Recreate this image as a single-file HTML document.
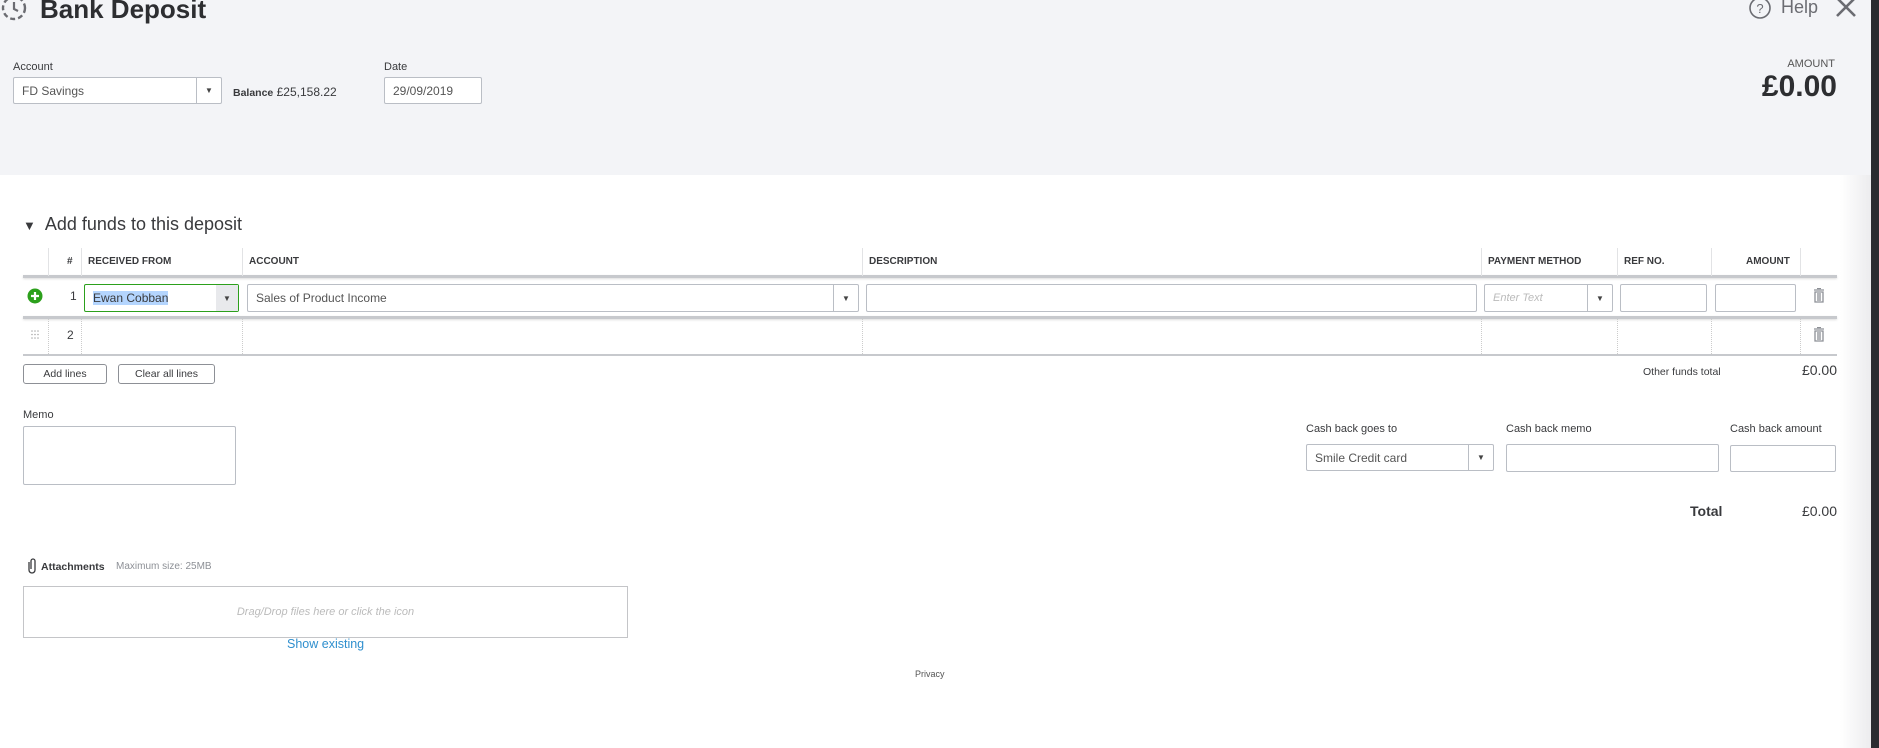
<!DOCTYPE html>
<html><head><meta charset="utf-8"><style>
*{box-sizing:border-box;margin:0;padding:0}
body{width:1879px;height:748px;overflow:hidden;background:#fff;font-family:"Liberation Sans",sans-serif;color:#393a3d;position:relative}
.a{position:absolute}
.hdr{left:0;top:0;width:1871px;height:175px;background:#f3f4f7}
.lbl{font-size:11px;color:#393a3d}
.inp{position:absolute;border:1px solid #babec5;background:#fff;border-radius:2px;font-size:12px;color:#555;padding-left:8px;display:flex;align-items:center}
.dd{position:absolute;right:0;top:0;bottom:0;width:25px;border-left:1px solid #babec5;display:flex;align-items:center;justify-content:center;font-size:8px;color:#444}
.th{font-size:10px;font-weight:bold;top:256px}
.vl{position:absolute;width:0;border-left:1px dotted #ccc}
.btn{position:absolute;border:1px solid #8d9096;border-radius:3px;font-size:10.5px;display:flex;align-items:center;justify-content:center;background:#fff}
</style></head><body>
<div class="a hdr"></div>
<div class="a" style="right:0;top:0;width:8px;height:748px;background:#2a2c30"></div>
<div class="a" style="left:1840px;top:175px;width:31px;height:573px;background:linear-gradient(90deg,#fff,#ececee)"></div>
<svg class="a" style="left:0;top:-6px" width="28" height="28" viewBox="0 0 28 28"><circle cx="14" cy="14" r="11" fill="none" stroke="#6b6c72" stroke-width="2.4" stroke-dasharray="5 3"/><path d="M14 8v7l4 2" stroke="#6b6c72" stroke-width="2.2" fill="none"/></svg>
<div class="a" style="left:40px;top:-6px;font-size:26px;font-weight:bold;color:#2d2e31">Bank Deposit</div>
<svg class="a" style="left:1748px;top:-3px" width="24" height="24"><circle cx="12" cy="11" r="10" fill="none" stroke="#6b6c72" stroke-width="1.6"/><text x="12" y="16" font-size="13" text-anchor="middle" fill="#6b6c72" font-family="Liberation Sans">?</text></svg>
<div class="a" style="left:1781px;top:-3px;font-size:18px;color:#6b6c72">Help</div>
<svg class="a" style="left:1834px;top:-4px" width="24" height="24"><path d="M3 2L21 20M21 2L3 20" stroke="#6b6c72" stroke-width="2.6"/></svg>
<div class="a lbl" style="left:13px;top:61px">Account</div>
<div class="inp" style="left:13px;top:77px;width:209px;height:27px">FD Savings<div class="dd">▼</div></div>
<div class="a" style="left:233px;top:85px;font-size:12px"><span style="font-size:10.5px;font-weight:bold">Balance</span> £25,158.22</div>
<div class="a lbl" style="left:384px;top:61px">Date</div>
<div class="inp" style="left:384px;top:77px;width:98px;height:27px">29/09/2019</div>
<div class="a" style="right:44px;top:58px;font-size:11px;color:#555">AMOUNT</div>
<div class="a" style="right:42px;top:70px;font-size:30px;font-weight:bold;color:#2d2e31">£0.00</div>
<div class="a" style="left:23px;top:214px;font-size:18px"><span style="font-size:13px">▼</span>&nbsp; Add funds to this deposit</div>
<!-- table -->
<div class="a th" style="left:67px">#</div>
<div class="a th" style="left:88px">RECEIVED FROM</div>
<div class="a th" style="left:249px">ACCOUNT</div>
<div class="a th" style="left:869px">DESCRIPTION</div>
<div class="a th" style="left:1488px">PAYMENT METHOD</div>
<div class="a th" style="left:1624px">REF NO.</div>
<div class="a th" style="left:1746px">AMOUNT</div>
<div class="a" style="left:23px;top:275px;width:1814px;height:3px;background:#c7c9cd;box-shadow:0 1px 2px #ddd"></div>
<div class="a" style="left:23px;top:316px;width:1814px;height:3px;background:#c7c9cd;box-shadow:0 1px 2px #ddd"></div>
<div class="a" style="left:23px;top:354px;width:1814px;height:2px;background:#c7c9cd"></div>
<div class="vl" style="left:48px;top:248px;height:28px;border-left-style:solid;border-color:#e2e3e5"></div>
<div class="vl" style="left:81px;top:248px;height:28px;border-left-style:solid;border-color:#e2e3e5"></div>
<div class="vl" style="left:242px;top:248px;height:28px;border-left-style:solid;border-color:#e2e3e5"></div>
<div class="vl" style="left:862px;top:248px;height:28px;border-left-style:solid;border-color:#e2e3e5"></div>
<div class="vl" style="left:1481px;top:248px;height:28px;border-left-style:solid;border-color:#e2e3e5"></div>
<div class="vl" style="left:1617px;top:248px;height:28px;border-left-style:solid;border-color:#e2e3e5"></div>
<div class="vl" style="left:1711px;top:248px;height:28px;border-left-style:solid;border-color:#e2e3e5"></div>
<div class="vl" style="left:1800px;top:248px;height:28px;border-left-style:solid;border-color:#e2e3e5"></div>
<div class="vl" style="left:48px;top:319px;height:35px"></div>
<div class="vl" style="left:81px;top:319px;height:35px"></div>
<div class="vl" style="left:242px;top:319px;height:35px"></div>
<div class="vl" style="left:862px;top:319px;height:35px"></div>
<div class="vl" style="left:1481px;top:319px;height:35px"></div>
<div class="vl" style="left:1617px;top:319px;height:35px"></div>
<div class="vl" style="left:1711px;top:319px;height:35px"></div>
<div class="vl" style="left:1800px;top:319px;height:35px"></div>
<svg class="a" style="left:27px;top:288px" width="16" height="16"><circle cx="8" cy="8" r="7.5" fill="#2ca01c"/><path d="M8 4v8M4 8h8" stroke="#fff" stroke-width="2.2"/></svg>
<div class="a" style="left:70px;top:289px;font-size:12px">1</div>
<div class="inp" style="left:84px;top:284px;width:155px;height:28px;border:1px solid #2ca01c"><span style="background:#b4d5fe;color:#393a3d">Ewan Cobban</span><div class="dd" style="background:#e8e9ec;border:none;width:22px">▼</div></div>
<div class="inp" style="left:247px;top:284px;width:612px;height:28px">Sales of Product Income<div class="dd">▼</div></div>
<div class="inp" style="left:866px;top:284px;width:611px;height:28px"></div>
<div class="inp" style="left:1484px;top:284px;width:129px;height:28px;color:#bbb;font-style:italic;font-size:11px">Enter Text<div class="dd" style="font-style:normal">▼</div></div>
<div class="inp" style="left:1620px;top:284px;width:87px;height:28px"></div>
<div class="inp" style="left:1715px;top:284px;width:81px;height:28px"></div>
<svg class="a" style="left:1813px;top:288px" width="12" height="15"><path d="M1 2h10M4 0.5h4M2 4h8v10H2zM5 5v8M7 5v8" stroke="#8d9096" stroke-width="1.3" fill="none"/></svg>
<svg class="a" style="left:1813px;top:327px" width="12" height="15"><path d="M1 2h10M4 0.5h4M2 4h8v10H2zM5 5v8M7 5v8" stroke="#8d9096" stroke-width="1.3" fill="none"/></svg>
<svg class="a" style="left:31px;top:330px" width="8" height="10"><g fill="#aaa"><circle cx="1" cy="1" r=".8"/><circle cx="4" cy="1" r=".8"/><circle cx="7" cy="1" r=".8"/><circle cx="1" cy="4.5" r=".8"/><circle cx="4" cy="4.5" r=".8"/><circle cx="7" cy="4.5" r=".8"/><circle cx="1" cy="8" r=".8"/><circle cx="4" cy="8" r=".8"/><circle cx="7" cy="8" r=".8"/></g></svg>
<div class="a" style="left:67px;top:328px;font-size:12px">2</div>
<div class="btn" style="left:23px;top:364px;width:84px;height:20px">Add lines</div>
<div class="btn" style="left:118px;top:364px;width:97px;height:20px">Clear all lines</div>
<div class="a" style="left:1643px;top:366px;font-size:10.5px">Other funds total</div>
<div class="a" style="right:42px;top:362px;font-size:14px">£0.00</div>
<div class="a lbl" style="left:23px;top:409px">Memo</div>
<div class="inp" style="left:23px;top:426px;width:213px;height:59px"></div>
<div class="a lbl" style="left:1306px;top:423px">Cash back goes to</div>
<div class="inp" style="left:1306px;top:444px;width:188px;height:27px">Smile Credit card<div class="dd">▼</div></div>
<div class="a lbl" style="left:1506px;top:423px">Cash back memo</div>
<div class="inp" style="left:1506px;top:444px;width:213px;height:28px"></div>
<div class="a lbl" style="left:1730px;top:423px">Cash back amount</div>
<div class="inp" style="left:1730px;top:445px;width:106px;height:27px"></div>
<div class="a" style="left:1690px;top:503px;font-size:14px;font-weight:bold">Total</div>
<div class="a" style="right:42px;top:503px;font-size:14px">£0.00</div>
<svg class="a" style="left:26px;top:557px" width="12" height="18"><path d="M3 5v8a3 3 0 0 0 6 0V4a2 2 0 0 0-4 0v8" stroke="#393a3d" stroke-width="1.3" fill="none"/></svg>
<div class="a" style="left:41px;top:561px;font-size:10.5px;font-weight:bold">Attachments</div>
<div class="a" style="left:116px;top:561px;font-size:10px;color:#8d9096">Maximum size: 25MB</div>
<div class="a" style="left:23px;top:586px;width:605px;height:52px;border:1px solid #c4c5c8;display:flex;align-items:center;justify-content:center;font-size:11px;font-style:italic;color:#bbb">Drag/Drop files here or click the icon</div>
<div class="a" style="left:287px;top:637px;font-size:12.5px;color:#2f8fce">Show existing</div>
<div class="a" style="left:915px;top:669px;font-size:9px;color:#555">Privacy</div>
</body></html>
